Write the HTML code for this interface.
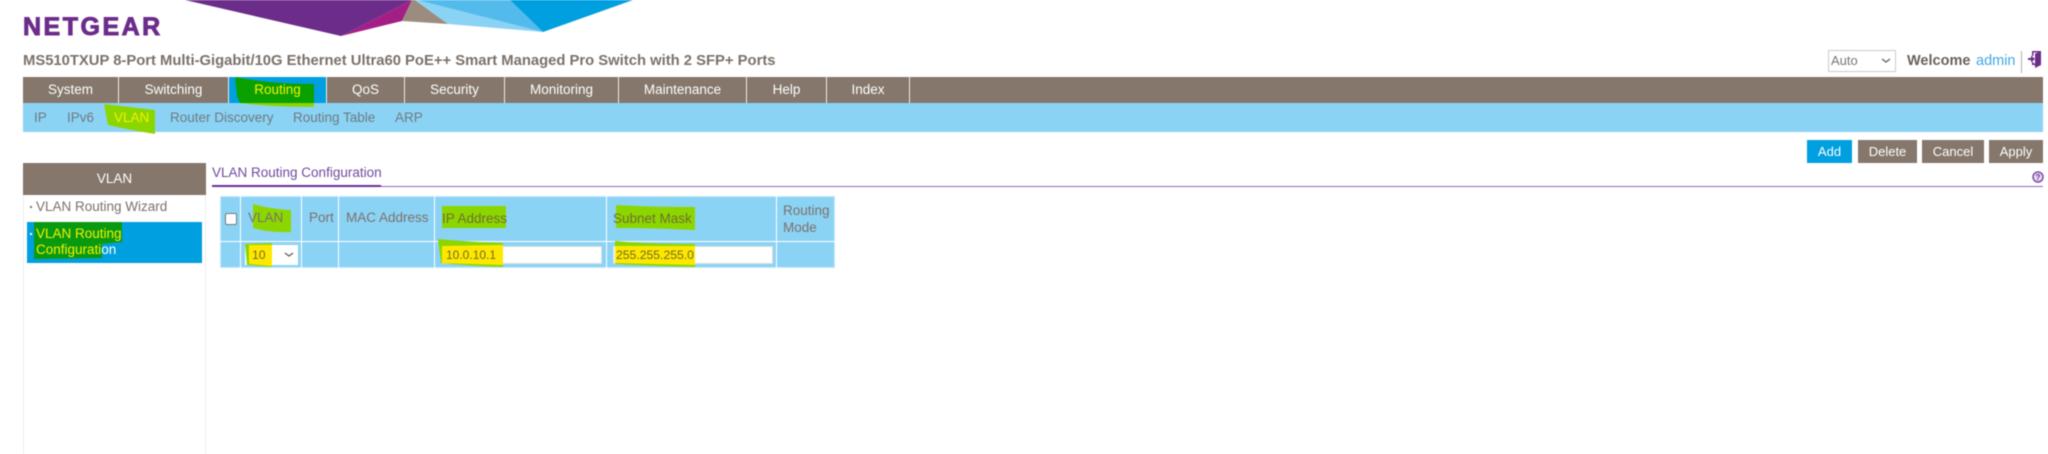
<!DOCTYPE html>
<html><head><meta charset="utf-8"><style>
html,body{margin:0;padding:0;background:#fff}
#p{position:relative;width:2048px;height:454px;overflow:hidden;background:#fff;font-family:"Liberation Sans",Arial,sans-serif;font-size:13.5px;color:#7b716a;filter:blur(.4px)}
#p div{position:absolute;box-sizing:border-box}
.t{white-space:nowrap;line-height:16px}
.nb{background:#85776b;top:77px;height:26px}
.n{top:77px;height:26px;line-height:25px;color:#fff;text-align:center;border-right:1px solid #efeae5;white-space:nowrap;font-size:13.5px}
.s{top:109px;white-space:nowrap;line-height:17px;color:#6f7a80;font-size:13.5px}
.b{top:140px;height:23px;line-height:23px;color:#fff;text-align:center;background:#85776b;font-size:13px}
.v{background:#fff;width:1px;top:196px;height:72px}
svg{position:absolute}
</style></head><body><div id="p">
<svg style="left:0;top:0" width="700" height="40">
<polygon points="185,0 341,36 412,0" fill="#6c2c8a"/>
<polygon points="341,36 402,21 412,0" fill="#a31f85"/>
<polygon points="412,0 402,21 448,24 415,0" fill="#9b8c7f"/>
<polygon points="415,0 448,24 543,32 417,0" fill="#8bd3f5"/>
<polygon points="417,0 543,32 510,0" fill="#52bbec"/>
<polygon points="510,0 543,32 633,0" fill="#009fdf"/>
</svg>
<div class="t" style="left:23px;top:14px;font:bold 25px/26px 'Liberation Sans',sans-serif;color:#6c2c8a;letter-spacing:2.5px;-webkit-text-stroke:.9px #6c2c8a">NETGEAR</div>
<div class="t" style="left:23px;top:53px;font-weight:bold;font-size:14.8px;color:#7b716a">MS510TXUP 8-Port Multi-Gigabit/10G Ethernet Ultra60 PoE++ Smart Managed Pro Switch with 2 SFP+ Ports</div>

<div style="left:1828px;top:50px;width:68px;height:22px;border:1px solid #ccc;background:#fff"></div>
<div class="t" style="left:1831px;top:53px;font-size:13px;color:#777">Auto</div>
<svg style="left:1881px;top:58px" width="10" height="6"><path d="M1 1l4 3 4-3" fill="none" stroke="#666" stroke-width="1.4"/></svg>
<div class="t" style="left:1907px;top:53px;font-weight:bold;color:#6a625b;font-size:14.5px">Welcome</div>
<div class="t" style="left:1976px;top:53px;color:#3fa9e0;font-size:14.5px">admin</div>
<div style="left:2021px;top:51px;width:1px;height:22px;background:#b5aea8"></div>
<svg style="left:2027px;top:50px" width="16" height="19"><path d="M5 1h9v14l-6 3v-3H5v-3h1.5v1.5H8V5l4-2.5H6.5V6H5z" fill="#6c2c8a"/><path d="M8 3.5l5-1.5v12l-5 2.500z" fill="#6c2c8a"/><path d="M1 8h3V5.500L8 9l-4 3.500V10H1z" fill="#6c2c8a"/></svg>

<div class="nb" style="left:23px;width:2020px"></div>
<div style="left:229px;top:77px;width:97px;height:26px;background:#009fdf"></div>
<div class="n" style="left:23px;width:96px">System</div>
<div class="n" style="left:119px;width:110px">Switching</div>
<div class="n" style="left:326px;width:79px;border-left:1px solid #efeae5">QoS</div>
<div class="n" style="left:405px;width:100px">Security</div>
<div class="n" style="left:505px;width:114px">Monitoring</div>
<div class="n" style="left:619px;width:128px">Maintenance</div>
<div class="n" style="left:747px;width:80px">Help</div>
<div class="n" style="left:827px;width:83px">Index</div>

<div style="left:23px;top:103px;width:2020px;height:29px;background:#8bd3f5"></div>
<svg style="left:0;top:70px" width="340" height="70">
<path d="M240 33 L314 33 L314 37 Q270 37 240 33Z" fill="#8cd600"/>
<path d="M235 7 Q270 14 314 14 L314 33 L240 33 L237 26Z" fill="#0aa000"/>
<path d="M104 34 Q130 37 155 40 L155 64 Q130 60 108 55Z" fill="#8cd600"/>
</svg>
<div class="n" style="left:229px;width:97px;color:#f6f000;border:0">Routing</div>
<div class="s" style="left:34px">IP</div>
<div class="s" style="left:67px">IPv6</div>
<div class="s" style="left:114px;color:#f6f000">VLAN</div>
<div class="s" style="left:170px">Router Discovery</div>
<div class="s" style="left:293px">Routing Table</div>
<div class="s" style="left:395px">ARP</div>

<div class="b" style="left:1807px;width:45px;background:#009fdf">Add</div>
<div class="b" style="left:1858px;width:59px">Delete</div>
<div class="b" style="left:1922px;width:62px">Cancel</div>
<div class="b" style="left:1989px;width:54px">Apply</div>

<div style="left:23px;top:195px;width:183px;height:259px;border-left:1px solid #eee;border-right:1px solid #eee"></div>
<div style="left:23px;top:163px;width:183px;height:32px;background:#85776b;color:#fff;text-align:center;line-height:32px">VLAN</div>
<div style="left:30px;top:206px;width:2px;height:2px;background:#777"></div>
<div class="t" style="left:36px;top:199px;color:#7b716a">VLAN Routing Wizard</div>
<div style="left:27px;top:222px;width:175px;height:41px;background:#009fdf"></div>
<svg style="left:30px;top:220px" width="100" height="42"><path d="M4 2 L92 2 L92 22 L72 24 L72 38 L4 39Z" fill="#0a9a10"/></svg>
<div style="left:30px;top:233px;width:2px;height:2px;background:#fff"></div>
<div class="t" style="left:36px;top:226px;color:#f6f000">VLAN Routing</div>
<div class="t" style="left:36px;top:242px;color:#f6f000">Configurati<span style="color:#fff">on</span></div>

<div class="t" style="left:212px;top:165px;color:#6f4a9e">VLAN Routing Configuration</div>
<div style="left:212px;top:186px;width:1831px;height:1px;background:#9464bc"></div>
<div style="left:212px;top:185px;width:169px;height:2px;background:#6c2c9a"></div>
<svg style="left:2032px;top:171px" width="12" height="12"><circle cx="6" cy="6" r="5" fill="#e6dcf0" stroke="#7a4fa8" stroke-width="1.5"/><text x="6" y="9" font-size="8" font-family="Liberation Sans" font-weight="bold" text-anchor="middle" fill="#6c2c8a">?</text></svg>

<div style="left:220px;top:196px;width:615px;height:72px;background:#8bd3f5;border:1px solid #c6e9f9"></div>
<div class="v" style="left:240px"></div><div class="v" style="left:301px"></div><div class="v" style="left:338px"></div>
<div class="v" style="left:434px"></div><div class="v" style="left:606px"></div><div class="v" style="left:776px"></div>
<div style="left:220px;top:241px;width:615px;height:1px;background:#fff"></div>

<div style="left:225px;top:213px;width:12px;height:12px;background:#fff;border:1px solid #777;border-radius:2px"></div>
<svg style="left:0;top:195px" width="720" height="80">
<path d="M253 9 Q270 14 291 15 L291 37 Q270 38 253 33Z" fill="#8cd600"/>
<path d="M442 11 L506 11 L506 33 L442 33Z" fill="#8cd600"/>
<path d="M616 10 Q650 12 695 12 L695 35 Q650 33 616 33Z" fill="#8cd600"/>
</svg>
<div class="t" style="left:248px;top:210px">VLAN</div>
<div class="t" style="left:309px;top:210px">Port</div>
<div class="t" style="left:346px;top:210px">MAC Address</div>
<div class="t" style="left:442px;top:211px;color:#6f6f30">IP Address</div>
<div class="t" style="left:613px;top:211px;color:#6f6f30">Subnet Mask</div>
<div class="t" style="left:783px;top:203px">Routing</div>
<div class="t" style="left:783px;top:220px">Mode</div>

<div style="left:245px;top:245px;width:53px;height:20px;background:#fff"></div>
<div style="left:442px;top:246px;width:160px;height:18px;background:#fff;border:1px solid #ddd"></div>
<div style="left:613px;top:246px;width:160px;height:18px;background:#fff;border:1px solid #ddd"></div>
<svg style="left:0;top:236px" width="720" height="36">
<path d="M245 8 L272 7 L272 31 L247 29Z" fill="#8cd600"/>
<path d="M249 9 L272 9 L272 30 L249 28Z" fill="#ffe800"/>
<path d="M438 3 Q470 6 503 7 L503 31 Q470 30 441 27Z" fill="#8cd600"/>
<path d="M442 10 L503 9 L503 29 L442 27Z" fill="#ffe800"/>
<path d="M615 5 Q650 8 695 8 L695 31 Q650 30 615 28Z" fill="#8cd600"/>
<path d="M615 10 L695 10 L695 29 L615 27Z" fill="#ffe800"/>
</svg>
<div class="t" style="left:252px;top:247px;color:#6f6a20;font-size:12.200px">10</div>
<svg style="left:284px;top:252px" width="10" height="6"><path d="M1 1l4 3 4-3" fill="none" stroke="#666" stroke-width="1.4"/></svg>
<div class="t" style="left:446px;top:247px;color:#6f6a20;font-size:12px">10.0.10.1</div>
<div class="t" style="left:616px;top:247px;color:#6f6a20;font-size:12.200px">255.255.255.0</div>
</div></body></html>
